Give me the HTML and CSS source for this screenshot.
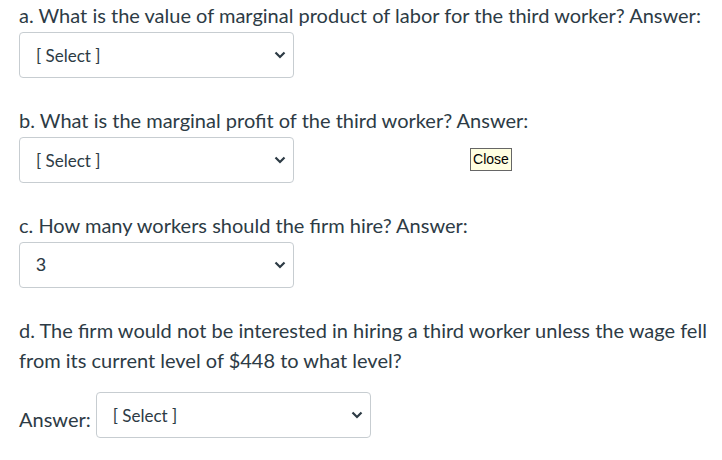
FILE: index.html
```html
<!DOCTYPE html>
<html>
<head>
<meta charset="utf-8">
<link rel="stylesheet" href="styles.css">
</head>
<body>
<div class="page">
  <p class="q">a. What is the value of marginal product of labor for the third worker? Answer:</p>
  <div class="sel"><span class="val">[ Select ]</span><svg class="chev" width="12" height="8" viewBox="0 0 12 8"><path d="M1.5 1.5 L6 6 L10.5 1.5" fill="none" stroke="#2d3b45" stroke-width="2.2"/></svg></div>

  <p class="q">b. What is the marginal profit of the third worker? Answer:</p>
  <div class="sel"><span class="val">[ Select ]</span><svg class="chev" width="12" height="8" viewBox="0 0 12 8"><path d="M1.5 1.5 L6 6 L10.5 1.5" fill="none" stroke="#2d3b45" stroke-width="2.2"/></svg></div>

  <p class="q">c. How many workers should the firm hire? Answer:</p>
  <div class="sel"><span class="val num">3</span><svg class="chev" width="12" height="8" viewBox="0 0 12 8"><path d="M1.5 1.5 L6 6 L10.5 1.5" fill="none" stroke="#2d3b45" stroke-width="2.2"/></svg></div>

  <p class="q last">d. The firm would not be interested in hiring a third worker unless the wage fell from its current level of $448 to what level?</p>
  <div class="answer-row">
    <span class="label">Answer:</span>
    <div class="sel"><span class="val">[ Select ]</span><svg class="chev" width="12" height="8" viewBox="0 0 12 8"><path d="M1.5 1.5 L6 6 L10.5 1.5" fill="none" stroke="#2d3b45" stroke-width="2.2"/></svg></div>
  </div>
  <div class="close-tip">Close</div>
</div>
</body>
</html>
```
FILE: styles.css
```css
html, body {
  margin: 0;
  padding: 0;
  background: #ffffff;
}
.page {
  position: relative;
  padding: 0 0 0 19px;
  font-family: Lato, "Liberation Sans", sans-serif;
  color: #2d3b45;
  width: 695px;
}
.q {
  margin: 0 0 2px 0;
  font-size: 20px;
  line-height: 30px;
}
.sel {
  box-sizing: border-box;
  width: 275px;
  height: 46px;
  border: 1px solid #c7cdd1;
  border-radius: 4px;
  background: #fff;
  display: flex;
  align-items: center;
  justify-content: space-between;
  padding: 0 7px 0 16px;
  margin-bottom: 27px;
}
.val {
  font-size: 17px;
  color: #2d3b45;
}
.val.num {
  font-family: "Liberation Sans", Arial, sans-serif;
  font-size: 18px;
}
.chev {
  display: block;
}
.q.last {
  margin-bottom: 17px;
}
.answer-row {
  display: flex;
  align-items: flex-start;
  gap: 5px;
}
.answer-row .label {
  font-size: 20px;
  line-height: 30px;
  margin-top: 12px;
}
.answer-row .sel {
  margin: 0;
}
.close-tip {
  position: absolute;
  left: 470px;
  top: 148px;
  box-sizing: border-box;
  width: 42px;
  height: 23px;
  border: 1px solid #666;
  background: #ffffe1;
  color: #000;
  font-family: "Liberation Sans", Arial, sans-serif;
  font-size: 14px;
  line-height: 21px;
  text-align: center;
}
```
